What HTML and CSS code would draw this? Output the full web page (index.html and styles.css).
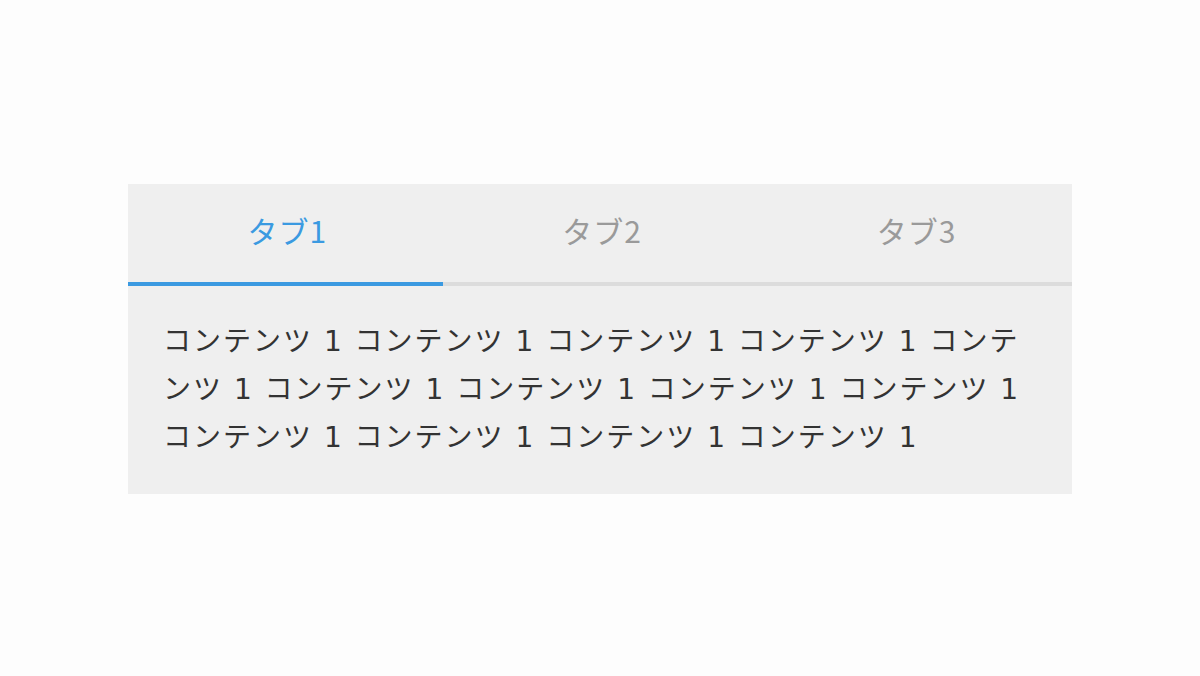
FILE: index.html
```html
<!DOCTYPE html>
<html lang="ja">
<head>
<meta charset="utf-8">
<link rel="stylesheet" href="styles.css">
</head>
<body>
<div class="page">
  <div class="tabs">
    <div class="tab-row">
      <div class="tab active">タブ1</div>
      <div class="tab">タブ2</div>
      <div class="tab">タブ3</div>
    </div>
    <div class="content">コンテンツ 1 コンテンツ 1 コンテンツ 1 コンテンツ 1 コンテンツ 1 コンテンツ 1 コンテンツ 1 コンテンツ 1 コンテンツ 1 コンテンツ 1 コンテンツ 1 コンテンツ 1 コンテンツ 1</div>
  </div>
</div>
</body>
</html>
```
FILE: styles.css
```css
html, body {
  margin: 0;
  padding: 0;
  background: #fdfdfd;
  font-family: "Noto Sans CJK JP", "Noto Sans", sans-serif;
}
.page {
  width: 1200px;
  height: 676px;
  padding-top: 184px;
  box-sizing: border-box;
  display: flex;
  justify-content: center;
  align-items: flex-start;
}
.tabs {
  width: 944px;
  background: #efefef;
}
.tab-row {
  display: flex;
}
.tab {
  flex: 1;
  height: 92px;
  padding-bottom: 6px;
  display: flex;
  align-items: center;
  justify-content: center;
  padding-left: 4px;
  font-family: "Noto Sans CJK JP", sans-serif;
  font-size: 30px;
  line-height: 1;
  letter-spacing: 1px;
  color: #9a9a9a;
  border-bottom: 4px solid #dcdcdc;
}
.tab.active {
  color: #3b9ae1;
  border-bottom-color: #3b9ae1;
}
.content {
  padding: 32px 36px 32px 35px;
  font-family: "DejaVu Sans", "Noto Sans CJK JP", sans-serif;
  font-size: 28px;
  line-height: 48px;
  letter-spacing: 2px;
  color: #333;
}
```
